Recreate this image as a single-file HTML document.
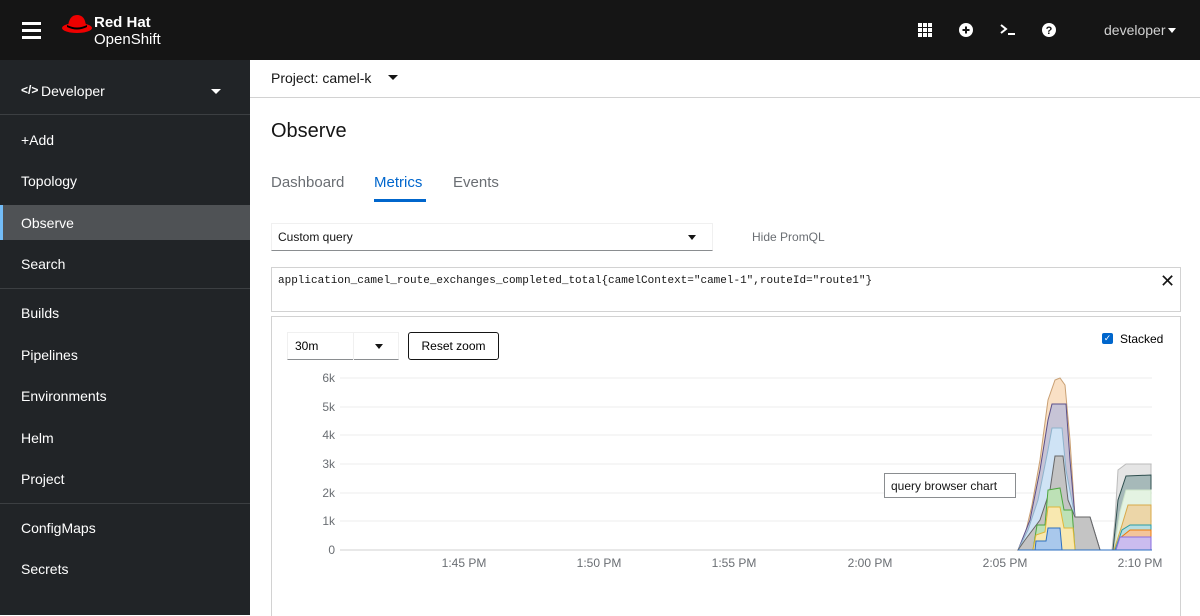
<!DOCTYPE html>
<html><head><style>
*{box-sizing:border-box;margin:0;padding:0}
body{width:1200px;height:615px;overflow:hidden;font-family:"Liberation Sans",sans-serif;background:#fff;position:relative}
.top{position:absolute;left:0;top:0;width:1200px;height:60px;background:#151515;color:#fff}
.side{position:absolute;left:0;top:60px;width:250px;height:555px;background:#212427;color:#fff;font-size:14px}
.side .it{position:absolute;left:21px}
.sep{position:absolute;left:0;width:250px;height:1px;background:#3c3f42}
.main{position:absolute;left:250px;top:60px;width:950px;height:555px}
.abs{position:absolute}
</style></head><body>
<div class="top">
 <div class="abs" style="left:22px;top:22px;width:19px;height:3px;background:#fff"></div>
 <div class="abs" style="left:22px;top:29px;width:19px;height:3px;background:#fff"></div>
 <div class="abs" style="left:22px;top:36px;width:19px;height:3px;background:#fff"></div>
 <svg class="abs" style="left:61px;top:13px" width="32" height="22" viewBox="0 0 32 22"><ellipse cx="16" cy="15" rx="15" ry="5" fill="#e00"/><path d="M7 14 Q8 2 16 2 Q24 2 25 13 Z" fill="#e00"/><path d="M6 12 Q16 17 26 12 L26 14 Q16 19 6 14Z" fill="#000"/></svg>
 <div class="abs" style="left:94px;top:14px;font-size:15px;font-weight:bold;line-height:17px">Red Hat</div>
 <div class="abs" style="left:94px;top:31px;font-size:15px;line-height:17px">OpenShift</div>
 <svg class="abs" style="left:918px;top:23px" width="14" height="14"><g fill="#fff"><rect x="0" y="0" width="4" height="4"/><rect x="5" y="0" width="4" height="4"/><rect x="10" y="0" width="4" height="4"/><rect x="0" y="5" width="4" height="4"/><rect x="5" y="5" width="4" height="4"/><rect x="10" y="5" width="4" height="4"/><rect x="0" y="10" width="4" height="4"/><rect x="5" y="10" width="4" height="4"/><rect x="10" y="10" width="4" height="4"/></g></svg>
 <svg class="abs" style="left:959px;top:23px" width="14" height="14"><circle cx="7" cy="7" r="7" fill="#fff"/><path d="M7 3.5V10.5M3.5 7H10.5" stroke="#151515" stroke-width="2"/></svg>
 <svg class="abs" style="left:1000px;top:24px" width="16" height="12"><path d="M1 1L6 5L1 9" stroke="#fff" stroke-width="2" fill="none"/><rect x="8" y="9" width="7" height="2" fill="#fff"/></svg>
 <svg class="abs" style="left:1042px;top:23px" width="14" height="14"><circle cx="7" cy="7" r="7" fill="#fff"/><text x="7" y="11" font-size="11" font-weight="bold" text-anchor="middle" fill="#151515" font-family="Liberation Sans">?</text></svg>
 <div class="abs" style="left:1104px;top:22px;font-size:14px;color:#d2d2d2">developer</div>
 <div class="abs" style="left:1168px;top:28px;border-left:4px solid transparent;border-right:4px solid transparent;border-top:5px solid #fff"></div>
</div>
<div class="side">
 <div class="abs" style="left:0;top:0;width:250px;height:55px;background:#212427;border-bottom:1px solid #3c3f42"></div>
 <div class="abs" style="left:21px;top:23px;font-size:12px;font-weight:bold">&lt;/&gt;</div>
 <div class="it" style="left:41px;top:23px">Developer</div>
 <div class="abs" style="left:211px;top:29px;border-left:5px solid transparent;border-right:5px solid transparent;border-top:5px solid #fff"></div>
 <div class="it" style="top:72px">+Add</div>
 <div class="it" style="top:113px">Topology</div>
 <div class="abs" style="left:0;top:145px;width:250px;height:35px;background:#4f5255;border-left:3px solid #73bcf7"></div>
 <div class="it" style="top:155px">Observe</div>
 <div class="it" style="top:196px">Search</div>
 <div class="sep" style="top:228px"></div>
 <div class="it" style="top:245px">Builds</div>
 <div class="it" style="top:287px">Pipelines</div>
 <div class="it" style="top:328px">Environments</div>
 <div class="it" style="top:370px">Helm</div>
 <div class="it" style="top:411px">Project</div>
 <div class="sep" style="top:443px"></div>
 <div class="it" style="top:460px">ConfigMaps</div>
 <div class="it" style="top:501px">Secrets</div>
</div>
<div class="main">
 <div class="abs" style="left:21px;top:10px;font-size:14px;color:#151515">Project: camel-k</div>
 <div class="abs" style="left:138px;top:15px;border-left:5px solid transparent;border-right:5px solid transparent;border-top:5px solid #151515"></div>
 <div class="abs" style="left:0;top:37px;width:950px;height:1px;background:#d2d2d2"></div>
 <div class="abs" style="left:21px;top:60px;font-size:20px;color:#151515">Observe</div>
 <div class="abs" style="left:21px;top:114px;font-size:15px;color:#6a6e73">Dashboard</div>
 <div class="abs" style="left:124px;top:114px;font-size:15px;color:#06c">Metrics</div>
 <div class="abs" style="left:124px;top:139px;width:52px;height:3px;background:#06c"></div>
 <div class="abs" style="left:203px;top:114px;font-size:15px;color:#6a6e73">Events</div>
 <div class="abs" style="left:21px;top:163px;width:442px;height:28px;border:1px solid #f0f0f0;border-bottom-color:#8a8d90"></div>
 <div class="abs" style="left:28px;top:170px;font-size:12px;color:#151515">Custom query</div>
 <div class="abs" style="left:438px;top:175px;border-left:4px solid transparent;border-right:4px solid transparent;border-top:5px solid #151515"></div>
 <div class="abs" style="left:502px;top:170px;font-size:12px;color:#6a6e73">Hide PromQL</div>
 <div class="abs" style="left:21px;top:207px;width:910px;height:45px;border:1px solid #d2d2d2"></div>
 <div class="abs" style="left:28px;top:215px;font-size:11px;font-family:'Liberation Mono',monospace;color:#151515">application_camel_route_exchanges_completed_total{camelContext="camel-1",routeId="route1"}</div>
 <div class="abs" style="left:910px;top:211px;font-size:18px;color:#151515">✕</div>
 <div class="abs" style="left:21px;top:256px;width:910px;height:300px;border:1px solid #d2d2d2;border-bottom:none"></div>
 <div class="abs" style="left:37px;top:272px;width:112px;height:28px;border:1px solid #f0f0f0;border-bottom-color:#8a8d90"></div>
 <div class="abs" style="left:103px;top:272px;width:1px;height:28px;background:#f0f0f0"></div>
 <div class="abs" style="left:45px;top:279px;font-size:12px">30m</div>
 <div class="abs" style="left:125px;top:284px;border-left:4px solid transparent;border-right:4px solid transparent;border-top:5px solid #151515"></div>
 <div class="abs" style="left:158px;top:272px;width:91px;height:28px;border:1px solid #151515;border-radius:3px;font-size:12px;text-align:center;line-height:26px">Reset zoom</div>
 <div class="abs" style="left:852px;top:273px;width:11px;height:11px;background:#06c;border-radius:2px;color:#fff;font-size:9px;line-height:11px;text-align:center">✓</div>
 <div class="abs" style="left:870px;top:272px;font-size:12px">Stacked</div>
</div>
<svg class="abs" style="left:250px;top:360px" width="950" height="215" viewBox="250 360 950 215" font-family="Liberation Sans" font-size="12" fill="#6a6e73">
 <g stroke="#ededed"><line x1="340" y1="378" x2="1152" y2="378"/><line x1="340" y1="407" x2="1152" y2="407"/><line x1="340" y1="435" x2="1152" y2="435"/><line x1="340" y1="464" x2="1152" y2="464"/><line x1="340" y1="493" x2="1152" y2="493"/><line x1="340" y1="521" x2="1152" y2="521"/></g>
 <line x1="340" y1="550" x2="1152" y2="550" stroke="#d2d2d2"/>
 <g text-anchor="end"><text x="335" y="382">6k</text><text x="335" y="411">5k</text><text x="335" y="439">4k</text><text x="335" y="468">3k</text><text x="335" y="497">2k</text><text x="335" y="525">1k</text><text x="335" y="554">0</text></g>
 <g text-anchor="middle"><text x="464" y="567">1:45 PM</text><text x="599" y="567">1:50 PM</text><text x="734" y="567">1:55 PM</text><text x="870" y="567">2:00 PM</text><text x="1005" y="567">2:05 PM</text><text x="1140" y="567">2:10 PM</text></g>
 <g stroke-width="1">
 <path d="M1018 550 L1025 535 L1032 505 L1040 460 L1048 400 L1055 380 L1060 378 L1065 385 L1070 440 L1075 517 L1090 517 L1100 550Z" fill="#f9e0c5" stroke="#c9a074"/>
 <path d="M1018 550 L1030 520 L1040 470 L1048 420 L1052 404 L1066 404 L1070 460 L1075 517 L1090 517 L1100 550Z" fill="#c7c4d6" stroke="#5a4f8a"/>
 <path d="M1018 550 L1028 530 L1038 500 L1048 450 L1052 428 L1062 428 L1066 470 L1075 517 L1090 517 L1100 550Z" fill="#cfe3f5" stroke="#8fb3cc"/>
 <path d="M1018 550 L1025 540 L1040 520 L1050 490 L1055 456 L1063 456 L1068 500 L1075 517 L1090 517 L1100 550Z" fill="#c4c4c4" stroke="#666"/>
 <path d="M1033 550 L1037 525 L1045 525 L1048 490 L1060 488 L1064 510 L1072 510 L1075 550Z" fill="#bde1b6" stroke="#4ca53f"/>
 <path d="M1033 550 L1036 535 L1045 532 L1048 507 L1060 507 L1064 528 L1073 528 L1075 550Z" fill="#f8e8b0" stroke="#e0b73a"/>
 <path d="M1035 550 L1036 541 L1046 541 L1048 528 L1060 528 L1062 550Z" fill="#a9c8ec" stroke="#2d6fc0"/>
 <path d="M1112 550 L1115 520 L1118 470 L1126 464 L1151 464 L1151 550Z" fill="#e5e5e5" stroke="#bbb"/>
 <path d="M1113 550 L1118 500 L1126 476 L1151 475 L1151 550Z" fill="#a6b9b9" stroke="#2f4f4f"/>
 <path d="M1114 550 L1120 512 L1126 490 L1151 490 L1151 550Z" fill="#e4f3e2" stroke="#cfe5cb"/>
 <path d="M1114 550 L1122 525 L1128 505 L1151 505 L1151 550Z" fill="#ecd6a8" stroke="#d9a949"/>
 <path d="M1115 550 L1122 530 L1130 525 L1151 525 L1151 550Z" fill="#b6dde0" stroke="#2a9ca3"/>
 <path d="M1116 550 L1120 538 L1130 530 L1151 530 L1151 550Z" fill="#f3c59b" stroke="#ec7a08"/>
 <path d="M1116 550 L1120 537 L1151 537 L1151 550Z" fill="#cbbcef" stroke="#8a6ddf"/>
 <line x1="1018" y1="550" x2="1152" y2="550" stroke="#2d6fc0"/>
 </g>
 <rect x="884.5" y="473.5" width="131" height="24" fill="#fff" stroke="#8a8d90"/>
 <text x="891" y="490" fill="#151515" font-size="12">query browser chart</text>
</svg>
<div class="abs" style="left:1180px;top:318px;width:1px;height:297px;background:#d2d2d2"></div>
</body></html>
